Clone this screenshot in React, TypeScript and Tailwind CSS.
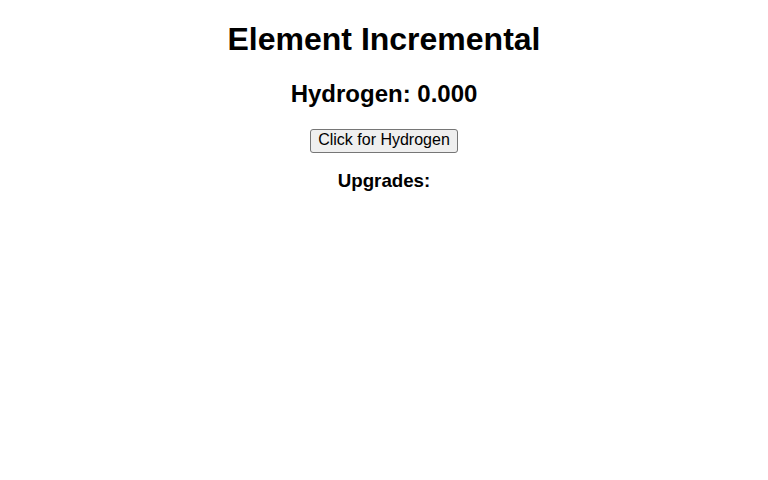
import React, { useState } from "react";

export default function App() {
  const [h, setH] = useState(0);
  return (
    <div
      className="min-h-[480px] bg-white px-2 pt-[21.44px] text-center text-black leading-[normal]"
      style={{ fontFamily: '"Liberation Sans", Arial, sans-serif' }}
    >
      <h1 className="mb-[21.44px] text-[32px] font-bold leading-[normal]">Element Incremental</h1>
      <h2 className="mb-[21px] text-[24px] font-bold leading-[normal]">Hydrogen: {h.toFixed(3)}</h2>
      <p className="mb-[17px] text-[16px] leading-[normal]">
        <button
          onClick={() => setH(h + 1)}
          className="rounded-[3px] border border-[#767676] bg-[#efefef] px-[7.5px] pt-[1.5px] pb-[2.5px] text-[16px] leading-[normal] text-black"
        >
          Click for Hydrogen
        </button>
      </p>
      <h3 className="text-[18.72px] font-bold leading-[normal]">Upgrades:</h3>
    </div>
  );
}
